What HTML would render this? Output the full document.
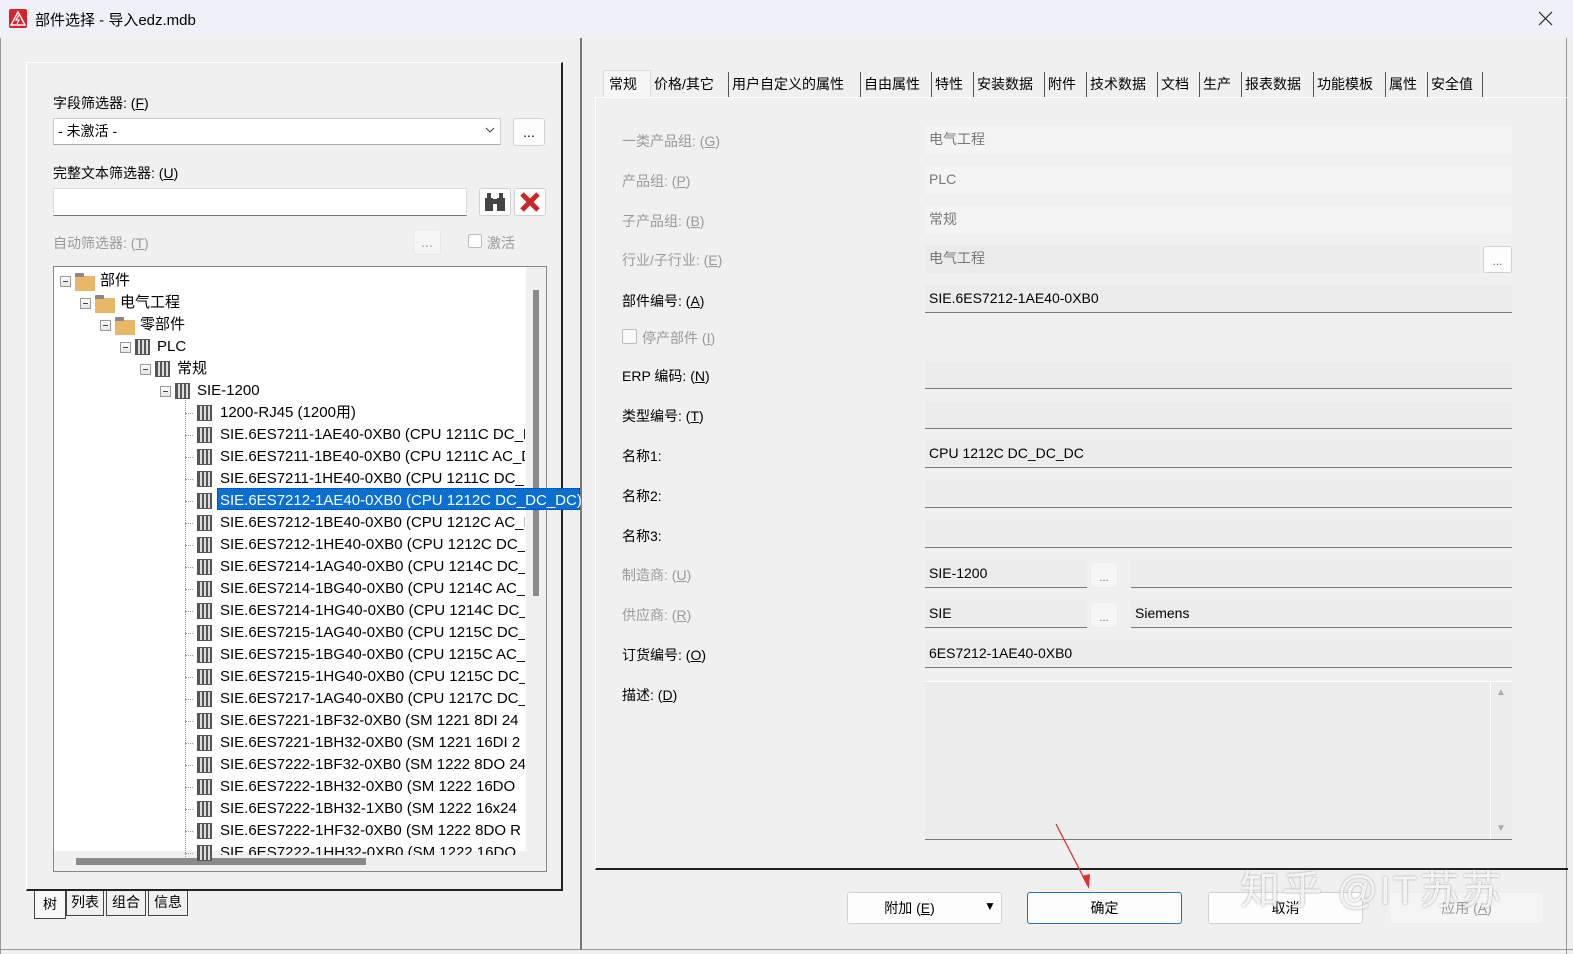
<!DOCTYPE html>
<html><head><meta charset="utf-8"><style>
*{box-sizing:border-box;margin:0;padding:0}
body{width:1573px;height:954px;overflow:hidden;background:#f0f0f0;font-family:"Liberation Sans","Noto Sans CJK SC",sans-serif;font-size:14px;color:#000;position:relative}
.a{position:absolute;white-space:nowrap}
.lbl{position:absolute;left:622px;font-size:14px;line-height:20px;white-space:nowrap}
.dis{color:#9a9a9a}
.fld{position:absolute;background:#ececec;border-bottom:1px solid #7a7a7a;font-size:14px;line-height:26px;padding-left:4px;height:28px;white-space:nowrap}
.fld.d{background:#f4f4f4;border-bottom:none;color:#777}
.btn{position:absolute;background:#fdfdfd;border:1px solid #d0d0d0;border-radius:3px;text-align:center;font-size:14px;white-space:nowrap}
.tab{position:absolute;top:72px;height:25px;font-size:14px;line-height:24px;border-right:1px solid #555;padding:0 3px;white-space:nowrap}
.row{position:absolute;height:22px;line-height:22px;font-size:15px;white-space:nowrap}
.mi{position:absolute;width:11px;height:11px;border:1px solid #999;background:linear-gradient(#fff,#e4e4e4)}
.mi:after{content:"";position:absolute;left:2px;top:4px;width:5px;height:1px;background:#444}
.fo{position:absolute;width:20px;height:15px;background:#e8b866;border-top:3px solid #e8b866}
.fo:before{content:"";position:absolute;left:0;top:-6px;width:9px;height:4px;background:#888;border-radius:1px 1px 0 0}
.pl{position:absolute;width:15px;height:16px;background:repeating-linear-gradient(90deg,#555 0 2px,#ddd 2px 4px);border:1px solid #555}
.dl{position:absolute;height:0;border-top:1px dotted #999;width:8px}
</style></head><body>
<div class="a" style="left:0;top:0;width:1573px;height:38px;background:#eef2f8"></div>
<div class="a" style="left:9px;top:9px;width:18px;height:19px;background:#d8232a;border-radius:2px"></div>
<svg class="a" style="left:9px;top:9px" width="18" height="19"><path d="M9 3 L16 16 L2 16 Z" fill="none" stroke="#fff" stroke-width="1.4"/><path d="M10 6 L7 11 L10 11 L8 15" fill="none" stroke="#fff" stroke-width="1.2"/></svg>
<div class="a" style="left:35px;top:9px;font-size:15px">部件选择 - 导入edz.mdb</div>
<svg class="a" style="left:1538px;top:11px" width="15" height="15"><path d="M1 1L14 14M14 1L1 14" stroke="#222" stroke-width="1.2"/></svg>
<div class="a" style="left:0;top:38px;width:1px;height:916px;background:#999"></div>
<div class="a" style="left:1566px;top:38px;width:1px;height:916px;background:#999"></div>
<div class="a" style="left:0;top:949px;width:1573px;height:1px;background:#999"></div>

<div class="a" style="left:26px;top:62px;width:537px;height:829px;border-right:2px solid #222;border-bottom:2px solid #222;border-top:1px solid #fff;border-left:1px solid #fff"></div>
<div class="a" style="left:53px;top:93px">字段筛选器: (<u>F</u>)</div>
<div class="a" style="left:53px;top:118px;width:448px;height:27px;background:#fff;border:1px solid #ccc;border-bottom-color:#aaa;line-height:25px;padding-left:4px">- 未激活 -</div>
<svg class="a" style="left:485px;top:127px" width="10" height="7"><path d="M1 1L5 5L9 1" fill="none" stroke="#444"/></svg>
<div class="btn" style="left:513px;top:118px;width:32px;height:28px;line-height:26px">...</div>
<div class="a" style="left:53px;top:163px">完整文本筛选器: (<u>U</u>)</div>
<div class="a" style="left:53px;top:188px;width:414px;height:28px;background:#fff;border:1px solid #ddd;border-bottom:1px solid #777"></div>
<div class="btn" style="left:479px;top:188px;width:32px;height:28px"></div>
<svg class="a" style="left:483px;top:192px" width="24" height="20"><rect x="2" y="6" width="8" height="13" fill="#444"/><rect x="14" y="6" width="8" height="13" fill="#444"/><rect x="4" y="1" width="4" height="6" fill="#444"/><rect x="16" y="1" width="4" height="6" fill="#444"/><rect x="9" y="7" width="6" height="5" fill="#444"/></svg>
<div class="btn" style="left:514px;top:188px;width:32px;height:28px"></div>
<svg class="a" style="left:518px;top:191px" width="24" height="22"><path d="M4 3L20 19M20 3L4 19" stroke="#c8282a" stroke-width="5"/></svg>
<div class="a dis" style="left:53px;top:233px">自动筛选器: (<u>T</u>)</div>
<div class="btn" style="left:413px;top:229px;width:28px;height:26px;line-height:24px;color:#999;background:#f5f5f5;border-color:#e8e8e8">...</div>
<div class="a" style="left:468px;top:234px;width:14px;height:14px;border:1px solid #bbb;background:#fff;border-radius:2px"></div>
<div class="a dis" style="left:487px;top:233px">激活</div>

<div class="a" style="left:53px;top:266px;width:494px;height:606px;background:#fff;border:1px solid #888;overflow:hidden">
<div class="a" style="left:0;top:584px;width:492px;height:20px;background:#f0f0f0"></div>
<div class="a" style="left:22px;top:591px;width:290px;height:7px;background:#8a8a8a"></div>
<div class="a" style="left:472px;top:0;width:20px;height:584px;background:#f0f0f0"></div>
<div class="a" style="left:479px;top:23px;width:6px;height:306px;background:#8a8a8a"></div>
<div class="a" style="left:131px;top:130px;width:0;height:460px;border-left:1px dotted #999"></div>
</div>
<div id="tree"></div>
<div class="a" style="left:217px;top:488px;width:363px;height:22px;background:#0a6fd0;border:1px dotted #333"></div>

<div class="a" style="left:34px;top:891px;width:32px;height:28px;background:#f8f8f8;border:1px solid #444;border-top:none;text-align:center;line-height:26px">树</div>
<div class="a" style="left:66px;top:891px;width:38px;height:25px;border:1px solid #444;border-top:none;text-align:center;line-height:23px">列表</div>
<div class="a" style="left:106px;top:891px;width:40px;height:25px;border:1px solid #444;border-top:none;text-align:center;line-height:23px">组合</div>
<div class="a" style="left:148px;top:891px;width:40px;height:25px;border:1px solid #444;border-top:none;text-align:center;line-height:23px">信息</div>

<div class="a" style="left:580px;top:38px;width:2px;height:912px;background:#777"></div>

<div class="a" style="left:603px;top:70px;width:48px;height:28px;background:#f6f6f6;border:1px solid #ddd;border-bottom:none"></div>
<div class="a" style="left:609px;top:74px">常规</div>
<div id="tabs"></div>
<div class="a" style="left:595px;top:97px;width:973px;height:773px;border-top:1px solid #fff;border-left:1px solid #fff;border-bottom:2px solid #222"></div>

<div class="lbl dis" style="top:131px">一类产品组: (<u>G</u>)</div>
<div class="fld d" style="left:925px;top:126px;width:587px">电气工程</div>
<div class="lbl dis" style="top:171px">产品组: (<u>P</u>)</div>
<div class="fld d" style="left:925px;top:166px;width:587px">PLC</div>
<div class="lbl dis" style="top:211px">子产品组: (<u>B</u>)</div>
<div class="fld d" style="left:925px;top:206px;width:587px">常规</div>
<div class="lbl dis" style="top:250px">行业/子行业: (<u>E</u>)</div>
<div class="fld" style="left:925px;top:245px;width:555px;color:#777;border-bottom:none;background:#ebebeb">电气工程</div>
<div class="btn" style="left:1483px;top:246px;width:29px;height:27px;line-height:28px;font-size:12px;color:#666">...</div>
<div class="lbl" style="top:291px">部件编号: (<u>A</u>)</div>
<div class="fld" style="left:925px;top:285px;width:587px">SIE.6ES7212-1AE40-0XB0</div>
<div class="a" style="left:622px;top:329px;width:15px;height:15px;border:1px solid #bbb;background:#fafafa;border-radius:2px"></div>
<div class="lbl dis" style="left:642px;top:328px">停产部件 (<u>I</u>)</div>
<div class="lbl" style="top:366px">ERP 编码: (<u>N</u>)</div>
<div class="fld" style="left:925px;top:361px;width:587px"></div>
<div class="lbl" style="top:406px">类型编号: (<u>T</u>)</div>
<div class="fld" style="left:925px;top:401px;width:587px"></div>
<div class="lbl" style="top:446px">名称1:</div>
<div class="fld" style="left:925px;top:440px;width:587px">CPU 1212C DC_DC_DC</div>
<div class="lbl" style="top:486px">名称2:</div>
<div class="fld" style="left:925px;top:480px;width:587px"></div>
<div class="lbl" style="top:526px">名称3:</div>
<div class="fld" style="left:925px;top:520px;width:587px"></div>
<div class="lbl dis" style="top:565px">制造商: (<u>U</u>)</div>
<div class="fld" style="left:925px;top:560px;width:162px">SIE-1200</div>
<div class="btn" style="left:1090px;top:562px;width:28px;height:26px;line-height:30px;font-size:11px;color:#666;background:#f6f6f6;border-color:#eee">...</div>
<div class="fld" style="left:1131px;top:560px;width:381px"></div>
<div class="lbl dis" style="top:605px">供应商: (<u>R</u>)</div>
<div class="fld" style="left:925px;top:600px;width:162px">SIE</div>
<div class="btn" style="left:1090px;top:602px;width:28px;height:26px;line-height:30px;font-size:11px;color:#666;background:#f6f6f6;border-color:#eee">...</div>
<div class="fld" style="left:1131px;top:600px;width:381px">Siemens</div>
<div class="lbl" style="top:645px">订货编号: (<u>O</u>)</div>
<div class="fld" style="left:925px;top:640px;width:587px">6ES7212-1AE40-0XB0</div>
<div class="lbl" style="top:685px">描述: (<u>D</u>)</div>
<div class="a" style="left:925px;top:681px;width:587px;height:159px;background:#ececec;border-top:1px solid #fff;border-bottom:1px solid #7a7a7a"></div>
<div class="a" style="left:1490px;top:682px;width:1px;height:157px;background:#fff"></div>
<div class="a" style="left:1496px;top:687px;color:#aaa;font-size:10px">▲</div>
<div class="a" style="left:1496px;top:823px;color:#aaa;font-size:10px">▼</div>

<div class="btn" style="left:847px;top:892px;width:155px;height:32px;line-height:31px;padding-right:30px">附加 (<u>E</u>)</div>
<div class="a" style="left:984px;top:899px;font-size:12px">▼</div>
<div class="btn" style="left:1027px;top:892px;width:155px;height:32px;line-height:30px;border:1px solid #2a6fb0">确定</div>
<div class="btn" style="left:1208px;top:892px;width:155px;height:32px;line-height:30px">取消</div>
<div class="btn" style="left:1389px;top:892px;width:155px;height:32px;line-height:30px;color:#999;background:#f5f5f5;border-color:#eee">应用 (<u>A</u>)</div>
<svg class="a" style="left:1050px;top:820px" width="45" height="72"><path d="M6 4L38 66" stroke="#e03030" stroke-width="1.3"/><path d="M32 56L39 69L40 54Z" fill="#e03030"/></svg>
<div class="a" style="left:1240px;top:858px;font-size:40px;color:rgba(255,255,255,0.85);text-shadow:0 0 2px #999;letter-spacing:2px">知乎 @IT苏苏</div>

<script>
var rows=[[0,'f','部件',1],[1,'f','电气工程',1],[2,'f','零部件',1],[3,'p','PLC',1],[4,'p','常规',1],[5,'p','SIE-1200',1],
[6,'p','1200-RJ45 (1200用)'],[6,'p','SIE.6ES7211-1AE40-0XB0 (CPU 1211C DC_D'],[6,'p','SIE.6ES7211-1BE40-0XB0 (CPU 1211C AC_D'],[6,'p','SIE.6ES7211-1HE40-0XB0 (CPU 1211C DC_'],[6,'p','SIE.6ES7212-1AE40-0XB0 (CPU 1212C DC_DC_DC)',0,1],
[6,'p','SIE.6ES7212-1BE40-0XB0 (CPU 1212C AC_D'],[6,'p','SIE.6ES7212-1HE40-0XB0 (CPU 1212C DC_'],[6,'p','SIE.6ES7214-1AG40-0XB0 (CPU 1214C DC_'],[6,'p','SIE.6ES7214-1BG40-0XB0 (CPU 1214C AC_'],[6,'p','SIE.6ES7214-1HG40-0XB0 (CPU 1214C DC_'],[6,'p','SIE.6ES7215-1AG40-0XB0 (CPU 1215C DC_'],[6,'p','SIE.6ES7215-1BG40-0XB0 (CPU 1215C AC_'],[6,'p','SIE.6ES7215-1HG40-0XB0 (CPU 1215C DC_'],[6,'p','SIE.6ES7217-1AG40-0XB0 (CPU 1217C DC_'],[6,'p','SIE.6ES7221-1BF32-0XB0 (SM 1221 8DI 24'],[6,'p','SIE.6ES7221-1BH32-0XB0 (SM 1221 16DI 2'],[6,'p','SIE.6ES7222-1BF32-0XB0 (SM 1222 8DO 24'],[6,'p','SIE.6ES7222-1BH32-0XB0 (SM 1222 16DO'],[6,'p','SIE.6ES7222-1BH32-1XB0 (SM 1222 16x24'],[6,'p','SIE.6ES7222-1HF32-0XB0 (SM 1222 8DO R'],[6,'p','SIE.6ES7222-1HH32-0XB0 (SM 1222 16DO']];
var h='';rows.forEach(function(r,i){var y=270+i*22,x=60+r[0]*20;if(y>850)return;
var clip=r[4]?'':'max-width:'+(525-220)+'px;overflow:hidden;';
if(r[3])h+='<div class="mi" style="left:'+x+'px;top:'+(y+6)+'px"></div>';
var ix=r[0]==6?197:x+15;
if(r[0]==6)h+='<div class="dl" style="left:185px;top:'+(y+11)+'px"></div>';
if(r[1]=='f')h+='<div class="fo" style="left:'+ix+'px;top:'+(y+6)+'px"></div>';else h+='<div class="pl" style="left:'+ix+'px;top:'+(y+3)+'px"></div>';
var tx=ix+(r[1]=='f'?25:22);if(r[0]==6)tx=220;
h+='<div class="row" style="left:'+tx+'px;top:'+(y)+'px;z-index:2;'+clip+(r[4]?'color:#fff;':'')+(y>835?'height:13px;overflow:hidden;':'')+'">'+r[2]+'</div>';});
document.getElementById('tree').innerHTML=h;
var t=[['价格/其它',651],['用户自定义的属性',729],['自由属性',861],['特性',932],['安装数据',974],['附件',1045],['技术数据',1087],['文档',1158],['生产',1200],['报表数据',1242],['功能模板',1314],['属性',1386],['安全值',1428]];
var s='';t.forEach(function(a,i){var w=(i<t.length-1?t[i+1][1]:1483)-a[1];s+='<div class="tab" style="left:'+a[1]+'px;width:'+w+'px">'+a[0]+'</div>';});
document.getElementById('tabs').innerHTML=s;
</script>
</body></html>
